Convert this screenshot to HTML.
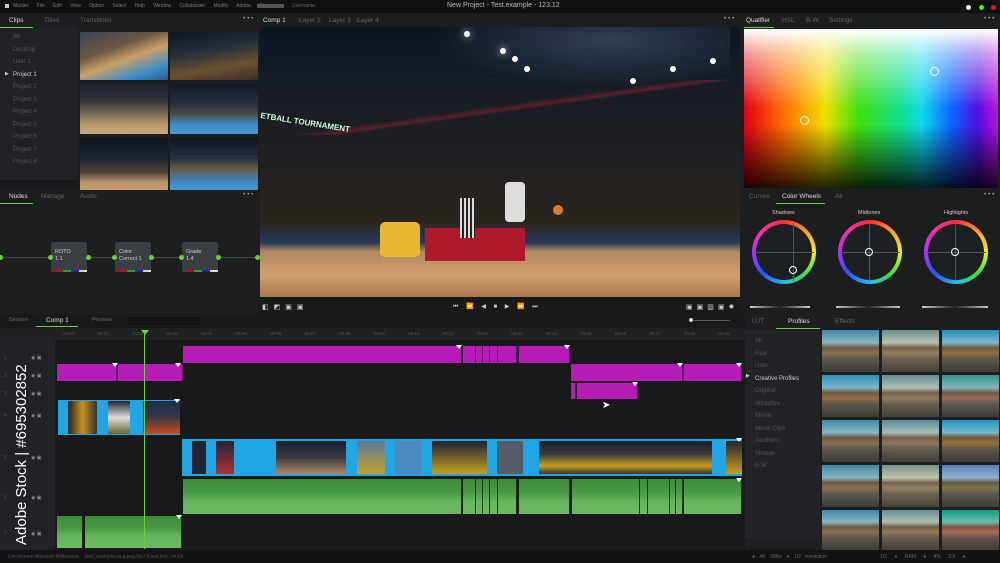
<!DOCTYPE html>
<html><head><meta charset="utf-8"><style>
*{margin:0;padding:0;box-sizing:border-box}
body{width:1000px;height:563px;background:#1b1d1f;overflow:hidden;position:relative;font-family:"Liberation Sans",sans-serif;color:#888;font-size:6px}
.a{position:absolute}
.tab{position:absolute;font-size:6.5px;color:#666}
.on{color:#ddd}
.ul{position:absolute;height:1px;background:#6bd13a}
.mg{position:absolute;background:#b81cb6;border-right:1px solid #6a0a68}
.gr{position:absolute;background:linear-gradient(#3d8a38,#4a9a44 40%,#64b35c 60%,#6dba62);border-right:1px solid #1a3a18}
.bl{position:absolute;background:#1fa6e6}
.th{position:absolute;border-radius:1px}
.tri{position:absolute;width:0;height:0;border-left:3px solid transparent;border-right:3px solid transparent;border-top:4px solid #fff}
.node{position:absolute;width:36px;height:30px;background:#3a3f44;border-radius:2px;font-size:5.5px;color:#ccc;padding:7px 0 0 4px;line-height:7px}
.node i{position:absolute;bottom:0;height:2px;width:8px}
.dot{position:absolute;width:5px;height:5px;border-radius:50%;background:#6bd13a}
.wheel{position:absolute;width:64px;height:64px;border-radius:50%;background:conic-gradient(#ff3030,#ff9a20,#f0f020,#40e040,#20c0e0,#3050ff,#b030ff,#ff30a0,#ff3030);}
.wheel:after{content:"";position:absolute;left:4px;top:4px;width:56px;height:56px;border-radius:50%;background:#1d2023}
.ph{position:absolute;width:57px;height:42px;background:linear-gradient(#3f8aa8 0,#8ab4c4 30%,#6a5a44 42%,#8a7050 55%,#5a564e 70%,#3e3c38 100%)}
</style></head><body>
<div class="a" style="left:0;top:0;width:1000px;height:13px;background:#101112"></div>
<div class="a" style="left:5px;top:4px;width:4px;height:4px;background:#ccc"></div>
<div class="a" style="left:13px;top:3px;font-size:5px;color:#777;word-spacing:7px">Master File Edit View Option Select Help Window Collaborate Modify Adobe Structure</div>
<div class="a" style="left:257px;top:4px;width:27px;height:4px;background:#555"></div>
<div class="a" style="left:292px;top:3px;font-size:5px;color:#666">Username</div>
<div class="a" style="left:447px;top:2px;font-size:7px;color:#bbb">New Project - Test.example - 123.12</div>
<div class="a" style="left:966px;top:5px;width:5px;height:5px;border-radius:50%;background:#fff"></div>
<div class="a" style="left:979px;top:5px;width:5px;height:5px;border-radius:50%;background:#5ce02a"></div>
<div class="a" style="left:991px;top:5px;width:5px;height:5px;border-radius:50%;background:#e01818"></div>

<div class="tab on" style="left:9px;top:17px">Clips</div><div class="ul" style="left:0;top:27px;width:33px"></div>
<div class="tab" style="left:44px;top:17px">Titles</div>
<div class="tab" style="left:80px;top:17px">Transitions</div>
<div class="tab" style="left:243px;top:15px;color:#999">• • •</div>
<div class="a" style="left:0;top:28px;width:78px;height:152px;background:#202225"></div>
<div class="a" style="left:13px;top:31px;font-size:6px;color:#555;line-height:12.5px">All<br>Desktop<br>User 1<br><span style="color:#ccc">Project 1</span><br>Project 2<br>Project 3<br>Project 4<br>Project 5<br>Project 6<br>Project 7<br>Project 8</div>
<div class="a" style="left:5px;top:71px;font-size:5px;color:#ccc">▶</div>
<div class="th" style="left:80px;top:32px;width:88px;height:48px;background:linear-gradient(160deg,#3a4454 0,#6a5844 35%,#c8a068 55%,#3f8ec8 80%,#2a5a8a)"></div>
<div class="th" style="left:170px;top:32px;width:88px;height:48px;background:linear-gradient(170deg,#0c1220 0,#28303c 40%,#6a5030 70%,#3a3028)"></div>
<div class="th" style="left:80px;top:84px;width:88px;height:50px;background:linear-gradient(#1a2030 0,#38383c 35%,#7a6a58 60%,#b89870 80%,#c8a878)"></div>
<div class="th" style="left:170px;top:84px;width:88px;height:50px;background:linear-gradient(#101826 0,#2a3040 40%,#4a4a40 60%,#3a8ac8 80%,#4a9ad0)"></div>
<div class="th" style="left:80px;top:138px;width:88px;height:52px;background:linear-gradient(#0c1220 0,#202630 40%,#4a4038 65%,#b89068 85%,#c8a070)"></div>
<div class="th" style="left:170px;top:138px;width:88px;height:52px;background:linear-gradient(#0c1422 0,#283040 40%,#6a5c48 60%,#3a88c8 85%,#4a98d0)"></div>
<div class="a" style="left:0;top:180px;width:78px;height:10px;background:#181a1c"></div>

<div class="a" style="left:0;top:190px;width:258px;height:122px;background:#1c1e20"></div>
<div class="tab on" style="left:9px;top:193px">Nodes</div><div class="ul" style="left:0;top:203px;width:33px"></div>
<div class="tab" style="left:41px;top:193px">Manage</div>
<div class="tab" style="left:80px;top:193px">Audio</div>
<div class="tab" style="left:243px;top:191px;color:#999">• • •</div>
<div class="a" style="left:0;top:257px;width:258px;height:1px;background:#444"></div>
<div class="node" style="left:51px;top:242px">ROTO<br>1.1<i style="left:3px;background:#c01010"></i><i style="left:12px;background:#2aa52a"></i><i style="left:20px;background:#2020c0"></i><i style="left:28px;background:#ddd"></i></div>
<div class="node" style="left:115px;top:242px">Color<br>Correct 1<i style="left:3px;background:#c01010"></i><i style="left:12px;background:#2aa52a"></i><i style="left:20px;background:#2020c0"></i><i style="left:28px;background:#ddd"></i></div>
<div class="node" style="left:182px;top:242px">Grade<br>1.4<i style="left:3px;background:#c01010"></i><i style="left:12px;background:#2aa52a"></i><i style="left:20px;background:#2020c0"></i><i style="left:28px;background:#ddd"></i></div>
<div class="dot" style="left:-2px;top:255px"></div><div class="dot" style="left:48px;top:255px"></div><div class="dot" style="left:86px;top:255px"></div><div class="dot" style="left:112px;top:255px"></div><div class="dot" style="left:149px;top:255px"></div><div class="dot" style="left:179px;top:255px"></div><div class="dot" style="left:216px;top:255px"></div><div class="dot" style="left:255px;top:255px"></div>

<div class="tab on" style="left:263px;top:17px">Comp 1</div>
<div class="tab" style="left:299px;top:17px">Layer 2</div>
<div class="tab" style="left:329px;top:17px">Layer 3</div>
<div class="tab" style="left:357px;top:17px">Layer 4</div>
<div class="tab" style="left:724px;top:15px;color:#999">• • •</div>
<div class="a" style="left:260px;top:27px;width:480px;height:270px;background:linear-gradient(#0c1420 0,#161c26 20%,#1c1e22 40%,#2a241e 72%,#2a3a5a 80%,#b08860 83%,#d2a070 92%,#a8784c 100%)"></div>
<div class="a" style="left:430px;top:27px;width:300px;height:60px;background:radial-gradient(ellipse at 60% 20%,rgba(120,160,200,.3),transparent 70%)"></div>
<div class="a" style="left:265px;top:80px;width:470px;height:55px;background:linear-gradient(-8deg,transparent 45%,rgba(200,40,60,.35) 48%,transparent 52%)"></div>
<div class="a" style="left:260px;top:118px;font-size:8px;color:#cfd;font-weight:bold;transform:rotate(9deg)">ETBALL TOURNAMENT</div>
<div class="a" style="left:425px;top:228px;width:100px;height:33px;background:#b0182c"></div>
<div class="a" style="left:505px;top:182px;width:20px;height:40px;background:#ddd;border-radius:4px"></div>
<div class="a" style="left:380px;top:222px;width:40px;height:35px;background:#e8b830;border-radius:5px"></div>
<div class="a" style="left:460px;top:198px;width:15px;height:40px;background:repeating-linear-gradient(90deg,#ddd 0 2px,#222 2px 4px)"></div>
<div class="a" style="left:553px;top:205px;width:10px;height:10px;border-radius:50%;background:#e07a30"></div>
<div class="a" style="left:464px;top:31px;width:6px;height:6px;border-radius:50%;background:#fff;box-shadow:0 0 8px #cde;"></div>
<div class="a" style="left:500px;top:48px;width:6px;height:6px;border-radius:50%;background:#fff;box-shadow:0 0 8px #cde,12px 8px 0 #fff,24px 18px 0 #fff,170px 18px 0 #fff,210px 10px 0 #fff,130px 30px 0 #fff"></div>
<div class="a" style="left:260px;top:297px;width:480px;height:18px;background:#17191b"></div>
<div class="a" style="left:262px;top:303px;font-size:7px;color:#ccc;letter-spacing:5px">◧◩▣▣</div>
<div class="a" style="left:453px;top:303px;font-size:6px;color:#ccc;word-spacing:6px">⏮ ⏪ ◀ ■ ▶ ⏩ ⏭</div>
<div class="a" style="left:686px;top:303px;font-size:7px;color:#ccc;letter-spacing:4px">▣▣▥▣✹</div>

<div class="tab on" style="left:746px;top:17px">Qualifier</div><div class="ul" style="left:744px;top:27px;width:30px"></div>
<div class="tab" style="left:782px;top:17px">HSL</div>
<div class="tab" style="left:806px;top:17px">B-W</div>
<div class="tab" style="left:829px;top:17px">Settings</div>
<div class="tab" style="left:984px;top:15px;color:#999">• • •</div>
<div class="a" style="left:744px;top:29px;width:254px;height:159px;background:linear-gradient(90deg,#e00010 0,#ff6a00 15%,#f0e000 32%,#40e010 45%,#10e090 62%,#10d8f0 70%,#1060ff 82%,#5010e0 92%,#c010e0 100%)"></div>
<div class="a" style="left:744px;top:29px;width:254px;height:159px;background:linear-gradient(#fff 0,rgba(255,255,255,.6) 15%,rgba(255,255,255,0) 50%,rgba(0,0,0,0) 60%,rgba(0,0,0,.85) 100%)"></div>
<div class="a" style="left:800px;top:116px;width:9px;height:9px;border:1px solid #fff;border-radius:50%"></div>
<div class="a" style="left:930px;top:67px;width:9px;height:9px;border:1px solid #fff;border-radius:50%"></div>
<div class="tab" style="left:749px;top:193px">Curves</div>
<div class="tab on" style="left:782px;top:193px">Color Wheels</div><div class="ul" style="left:776px;top:203px;width:49px"></div>
<div class="tab" style="left:835px;top:193px">All</div>
<div class="tab" style="left:984px;top:191px;color:#999">• • •</div>
<div class="a" style="left:772px;top:210px;font-size:5.5px;color:#ccc">Shadows</div>
<div class="a" style="left:858px;top:210px;font-size:5.5px;color:#ccc">Midtones</div>
<div class="a" style="left:944px;top:210px;font-size:5.5px;color:#ccc">Highlights</div>
<div class="wheel" style="left:752px;top:220px"></div>
<div class="wheel" style="left:838px;top:220px"></div>
<div class="wheel" style="left:924px;top:220px"></div>
<div class="a" style="left:754px;top:252px;width:60px;height:1px;background:#555"></div>
<div class="a" style="left:840px;top:252px;width:60px;height:1px;background:#555"></div>
<div class="a" style="left:926px;top:252px;width:60px;height:1px;background:#555"></div>
<div class="a" style="left:793px;top:223px;width:1px;height:58px;background:#555"></div>
<div class="a" style="left:869px;top:223px;width:1px;height:58px;background:#555"></div>
<div class="a" style="left:955px;top:223px;width:1px;height:58px;background:#555"></div>
<div class="a" style="left:789px;top:266px;width:8px;height:8px;border:1.5px solid #fff;border-radius:50%"></div>
<div class="a" style="left:865px;top:248px;width:8px;height:8px;border:1.5px solid #fff;border-radius:50%"></div>
<div class="a" style="left:951px;top:248px;width:8px;height:8px;border:1.5px solid #fff;border-radius:50%"></div>
<div class="a" style="left:750px;top:306px;width:60px;height:2px;background:linear-gradient(90deg,#ccc,#222,#ccc)"></div>
<div class="a" style="left:836px;top:306px;width:64px;height:2px;background:linear-gradient(90deg,#ccc,#222,#ccc)"></div>
<div class="a" style="left:922px;top:306px;width:66px;height:2px;background:linear-gradient(90deg,#ccc,#222,#ccc)"></div>

<div class="a" style="left:0;top:314px;width:745px;height:236px;background:#18191b"></div>
<div class="tab" style="left:9px;top:317px;font-size:5.5px">Session</div>
<div class="tab on" style="left:46px;top:317px">Comp 1</div><div class="ul" style="left:36px;top:326px;width:42px"></div>
<div class="tab" style="left:92px;top:317px;font-size:5.5px">Preview</div>
<div class="a" style="left:128px;top:317px;width:73px;height:8px;background:#131415"></div>
<div class="a" style="left:0;top:328px;width:745px;height:12px;background:#1e2022"></div>
<div class="a" style="left:63px;top:331px;font-size:4.5px;color:#555;word-spacing:22px">00:00 00:01 00:02 00:03 00:04 00:05 00:06 00:07 00:08 00:09 00:10 00:11 00:12 00:13 00:14 00:15 00:16 00:17 00:18 00:19 00:20</div>
<div class="a" style="left:0;top:340px;width:55px;height:210px;background:#202225"></div>
<div class="a" style="left:4px;top:349px;font-size:5px;color:#555;line-height:18px">1<br>2<br>3</div>
<div class="a" style="left:4px;top:413px;font-size:5px;color:#555">4</div>
<div class="a" style="left:4px;top:455px;font-size:5px;color:#555">5</div>
<div class="a" style="left:4px;top:495px;font-size:5px;color:#555">6</div>
<div class="a" style="left:4px;top:531px;font-size:5px;color:#555">7</div>
<div class="a" style="left:31px;top:349px;font-size:5px;color:#888;line-height:18px">◉ ▣<br>◉ ▣<br>◉ ▣</div>
<div class="a" style="left:31px;top:413px;font-size:5px;color:#888">◉ ▣</div>
<div class="a" style="left:31px;top:455px;font-size:5px;color:#888">◉ ▣</div>
<div class="a" style="left:31px;top:495px;font-size:5px;color:#888">◉ ▣</div>
<div class="a" style="left:31px;top:531px;font-size:5px;color:#888">◉ ▣</div>
<div class="a" style="left:14px;top:350px;width:16px;height:195px;color:#fff;font-size:15px;writing-mode:vertical-rl;transform:rotate(180deg);white-space:nowrap;line-height:16px">Adobe Stock | #695302852</div>
<div class="mg" style="left:183px;top:346px;width:279px;height:17px"></div>
<div class="mg" style="left:463px;top:346px;width:13px;height:17px"></div>
<div class="mg" style="left:476px;top:346px;width:7px;height:17px"></div>
<div class="mg" style="left:483px;top:346px;width:7px;height:17px"></div>
<div class="mg" style="left:490px;top:346px;width:8px;height:17px"></div>
<div class="mg" style="left:498px;top:346px;width:19px;height:17px"></div>
<div class="mg" style="left:519px;top:346px;width:51px;height:17px"></div>
<div class="mg" style="left:57px;top:364px;width:60px;height:17px"></div>
<div class="mg" style="left:118px;top:364px;width:65px;height:17px"></div>
<div class="mg" style="left:571px;top:364px;width:112px;height:17px"></div>
<div class="mg" style="left:684px;top:364px;width:58px;height:17px"></div>
<div class="mg" style="left:571px;top:383px;width:5px;height:16px"></div>
<div class="mg" style="left:577px;top:383px;width:61px;height:16px"></div>
<div class="bl" style="left:58px;top:400px;width:122px;height:35px"></div>
<div class="th" style="left:68px;top:401px;width:29px;height:33px;background:linear-gradient(90deg,#222,#c89020,#333)"></div>
<div class="th" style="left:108px;top:401px;width:22px;height:33px;background:linear-gradient(#223,#ddd 50%,#663)"></div>
<div class="th" style="left:143px;top:401px;width:37px;height:33px;background:linear-gradient(#1a2a4a,#3a3a44 50%,#c84a20)"></div>
<div class="bl" style="left:182px;top:439px;width:560px;height:37px"></div>
<div class="th" style="left:192px;top:441px;width:14px;height:33px;background:#223"></div>
<div class="th" style="left:216px;top:441px;width:18px;height:33px;background:linear-gradient(#223,#a33)"></div>
<div class="th" style="left:276px;top:441px;width:70px;height:33px;background:linear-gradient(#1a2030,#3a3a44 50%,#b08860)"></div>
<div class="th" style="left:357px;top:441px;width:28px;height:33px;background:linear-gradient(#5a7a9a,#c8a030)"></div>
<div class="th" style="left:395px;top:441px;width:26px;height:33px;background:#4a8ac0"></div>
<div class="th" style="left:432px;top:441px;width:55px;height:33px;background:linear-gradient(#1a2236,#c8a020)"></div>
<div class="th" style="left:497px;top:441px;width:26px;height:33px;background:#555c66"></div>
<div class="th" style="left:539px;top:441px;width:173px;height:33px;background:linear-gradient(#1a1e2a,#3a3a3a 40%,#c8a020 75%,#333)"></div>
<div class="th" style="left:726px;top:441px;width:16px;height:33px;background:linear-gradient(#223,#c8a020)"></div>
<div class="gr" style="left:183px;top:479px;width:279px;height:35px"></div>
<div class="gr" style="left:463px;top:479px;width:13px;height:35px"></div>
<div class="gr" style="left:476px;top:479px;width:7px;height:35px"></div>
<div class="gr" style="left:483px;top:479px;width:7px;height:35px"></div>
<div class="gr" style="left:490px;top:479px;width:8px;height:35px"></div>
<div class="gr" style="left:498px;top:479px;width:19px;height:35px"></div>
<div class="gr" style="left:519px;top:479px;width:51px;height:35px"></div>
<div class="gr" style="left:572px;top:479px;width:68px;height:35px"></div>
<div class="gr" style="left:640px;top:479px;width:8px;height:35px"></div>
<div class="gr" style="left:648px;top:479px;width:22px;height:35px"></div>
<div class="gr" style="left:670px;top:479px;width:6px;height:35px"></div>
<div class="gr" style="left:676px;top:479px;width:7px;height:35px"></div>
<div class="gr" style="left:684px;top:479px;width:58px;height:35px"></div>
<div class="gr" style="left:57px;top:516px;width:26px;height:32px"></div>
<div class="gr" style="left:85px;top:516px;width:97px;height:32px"></div>
<div class="a" style="left:144px;top:333px;width:1px;height:216px;background:#6bd13a"></div>
<div class="tri" style="left:141px;top:330px;border-top-color:#6bd13a;border-left-width:4px;border-right-width:4px;border-top-width:5px"></div>
<div class="tri" style="left:175px;top:363px"></div><div class="tri" style="left:112px;top:363px"></div>
<div class="tri" style="left:456px;top:345px"></div><div class="tri" style="left:564px;top:345px"></div>
<div class="tri" style="left:677px;top:363px"></div><div class="tri" style="left:736px;top:363px"></div>
<div class="tri" style="left:632px;top:382px"></div>
<div class="tri" style="left:174px;top:399px"></div><div class="tri" style="left:736px;top:438px"></div>
<div class="tri" style="left:736px;top:478px"></div><div class="tri" style="left:176px;top:515px"></div>
<div class="a" style="left:602px;top:400px;font-size:10px;color:#fff">➤</div>
<div class="a" style="left:690px;top:320px;width:40px;height:1px;background:#555"></div>
<div class="a" style="left:689px;top:318px;width:4px;height:4px;border-radius:50%;background:#ddd"></div>
<div class="a" style="left:0;top:550px;width:1000px;height:13px;background:#121314"></div>
<div class="a" style="left:8px;top:554px;font-size:5px;color:#555">Uncommon Absolute Reference</div>
<div class="a" style="left:85px;top:554px;font-size:5px;color:#555">test_example.vs.a.png.hp / 3.test.test / m.f.b</div>
<div class="a" style="left:752px;top:554px;font-size:5px;color:#666;word-spacing:3px">● 4K 30fps ● 1/2 resolution</div>
<div class="a" style="left:880px;top:554px;font-size:5px;color:#666;word-spacing:6px">1/2 ● RAM ● 4% 2.5 ●</div>

<div class="a" style="left:745px;top:314px;width:255px;height:236px;background:#1c1e20"></div>
<div class="tab" style="left:752px;top:318px">LUT</div>
<div class="tab on" style="left:788px;top:318px">Profiles</div><div class="ul" style="left:776px;top:328px;width:44px"></div>
<div class="tab" style="left:835px;top:318px">Effects</div>
<div class="a" style="left:745px;top:330px;width:75px;height:208px;background:#212326"></div>
<div class="a" style="left:755px;top:335px;font-size:6px;color:#555;line-height:12.5px">All<br>Raw<br>User<br><span style="color:#ccc">Creative Profiles</span><br>Original<br>Attractive<br>Movie<br>Music Clips<br>Aesthetic<br>Vintage<br>B-W</div>
<div class="a" style="left:746px;top:373px;font-size:5px;color:#ccc">▶</div>
<div class="ph" style="left:822px;top:330px"></div><div class="ph" style="left:882px;top:330px;filter:sepia(.5)"></div><div class="ph" style="left:942px;top:330px;filter:saturate(1.4)"></div>
<div class="ph" style="left:822px;top:375px;filter:saturate(1.3)"></div><div class="ph" style="left:882px;top:375px;filter:sepia(.4)"></div><div class="ph" style="left:942px;top:375px;filter:hue-rotate(-20deg)"></div>
<div class="ph" style="left:822px;top:420px"></div><div class="ph" style="left:882px;top:420px;filter:sepia(.3)"></div><div class="ph" style="left:942px;top:420px;filter:saturate(1.5)"></div>
<div class="ph" style="left:822px;top:465px"></div><div class="ph" style="left:882px;top:465px;filter:sepia(.6)"></div><div class="ph" style="left:942px;top:465px;filter:hue-rotate(20deg)"></div>
<div class="ph" style="left:822px;top:510px;height:40px"></div><div class="ph" style="left:882px;top:510px;height:40px;filter:sepia(.4)"></div><div class="ph" style="left:942px;top:510px;height:40px;filter:hue-rotate(-30deg) saturate(1.5)"></div>
</body></html>
